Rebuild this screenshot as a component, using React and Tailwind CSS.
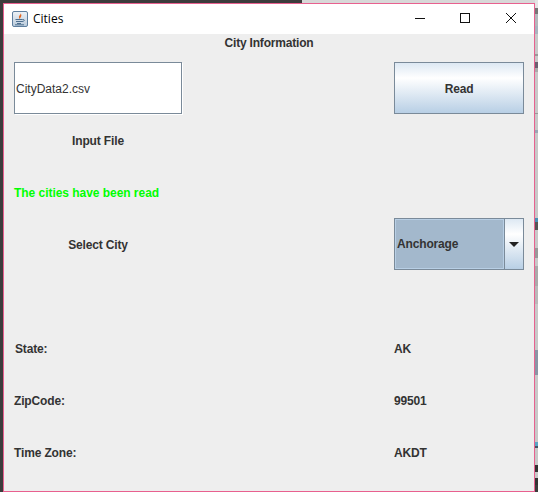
import React from "react";

const stripe = [
  [8, "#e4e4e4"], [6, "#777777"], [12, "#b4b8bc"], [8, "#a9b4bf"], [20, "#c8c8c8"], [2, "#999999"],
  [6, "#c8c8c8"], [6, "#6a6070"], [4, "#aaaaaa"], [41, "#c8c8c8"], [1, "#999999"], [16, "#c8c8c8"],
  [3, "#9aa7b5"], [85, "#c8c8c8"], [4, "#4a90b5"], [8, "#555555"], [18, "#c8c8c8"], [10, "#999999"],
  [8, "#c8c8c8"], [20, "#aaaaaa"], [18, "#b9b9b9"], [46, "#c8c8c8"], [25, "#8a95a5"], [67, "#c8c8c8"],
  [4, "#5aa5c5"], [2, "#445566"], [17, "#c8c8c8"], [7, "#333333"], [6, "#c8c8c8"], [7, "#333333"],
];

const JavaIcon = () => (
  <svg width="16" height="16" viewBox="0 0 16 16" fill="none">
    <defs>
      <linearGradient id="frame" x1="0" y1="0" x2="0" y2="1">
        <stop offset="0" stopColor="#eef2f6" />
        <stop offset="1" stopColor="#b9cadb" />
      </linearGradient>
    </defs>
    <rect x="0.5" y="0.5" width="15" height="15" rx="1.5" fill="url(#frame)" stroke="#5f7f9f" />
    <path d="M8.5 2C9.5 3.5 6.5 4.5 7 6.5C7.3 7.5 8 8 8 8C7.8 6.5 10.8 5.5 8.5 2Z" fill="#e2661f" />
    <path d="M3.5 8.5H10.5M4 10.5H10M5 12.5H9" stroke="#4d6f8f" strokeWidth="1.2" />
    <path d="M10.5 8.5C13 8 13 10.5 10 10.5" stroke="#4d6f8f" />
    <path d="M3 13.8H12" stroke="#4d6f8f" />
  </svg>
);

const Label = ({ children, className = "" }) => (
  <div className={`flex items-center h-[52px] pt-[1px] font-bold text-[12px] tracking-[-0.15px] text-[#333333] ${className}`}>{children}</div>
);

export default function App() {
  return (
    <div className="relative w-[538px] h-[492px] overflow-hidden bg-[#3c3c3c] font-['Liberation_Sans',Arial,sans-serif]">
      <div className="flex h-[3px]">
        <div className="w-[302px] bg-[#3c3c3c]"></div>
        <div className="flex-1 bg-[#d8d8d8]"></div>
      </div>
      <div className="flex h-[489px]">
        <div className="w-[3px] bg-[#3c3c3c]"></div>
        <div className="w-[532px] flex flex-col border border-[#e8608f] bg-[#eeeeee]">
          <div className="flex items-center h-[30px] bg-white pl-[8px] shrink-0">
            <JavaIcon />
            <span className="ml-[5px] text-[12px] text-black font-['Open_Sans',sans-serif]">Cities</span>
            <div className="ml-auto flex items-center text-black">
              <svg width="138" height="30" viewBox="0 0 138 30" fill="none" stroke="#111111">
                <path d="M19 14.5H29" />
                <rect x="64.5" y="9.5" width="9" height="9" />
                <path d="M110 9L120 19M120 9L110 19" />
              </svg>
            </div>
          </div>
          <div className="h-[28px] pb-[10px] flex items-center justify-center font-bold text-[12px] tracking-[-0.19px] text-[#333333] shrink-0">
            City Information
          </div>
          <div className="grid grid-cols-[168px_1fr_130px] px-[10px]">
            <div className="h-[52px] flex items-center pl-[1px] pt-[1px] bg-white border border-[#7a8a99] text-[12px] text-[#333333] shadow-[1px_1px_0_#ffffff]">
              CityData2.csv
            </div>
            <div></div>
            <div className="h-[52px] flex items-center justify-center pt-[1px] font-bold text-[12px] tracking-[-0.15px] text-[#333333] border border-[#7a8a99] bg-[linear-gradient(#dde8f3_0%,#ffffff_30%,#b8cfe5_100%)]">
              Read
            </div>

            <Label className="justify-center">Input File</Label>
            <div></div>
            <div></div>

            <Label className="col-span-3 !text-[#00ff00] !tracking-[-0.04px]">The cities have been read</Label>

            <Label className="justify-center">Select City</Label>
            <div></div>
            <div className="h-[52px] flex border border-[#7a8a99]">
              <div className="flex-1 flex items-center pl-[1px] bg-[#a3b8cc] border border-[#b8cfe5] font-bold text-[12px] tracking-[-0.15px] text-[#333333]">
                Anchorage
              </div>
              <div className="w-[19px] flex items-center justify-center border-l border-[#7a8a99] bg-[linear-gradient(#dde8f3_0%,#ffffff_30%,#b8cfe5_100%)]">
                <svg width="10" height="5" viewBox="0 0 10 5">
                  <path d="M0 0H10L5 5Z" fill="#222222" />
                </svg>
              </div>
            </div>

            <div className="col-span-3 h-[52px]"></div>

            <Label className="pl-[1px]">State:</Label>
            <div></div>
            <Label>AK</Label>

            <Label>ZipCode:</Label>
            <div></div>
            <Label>99501</Label>

            <Label>Time Zone:</Label>
            <div></div>
            <Label>AKDT</Label>
          </div>
        </div>
        <div className="w-[3px]"></div>
      </div>
      <div className="absolute top-0 left-[535px] w-[3px] flex flex-col">
        {stripe.map(([h, c], i) => (
          <div key={i} style={{ height: h, backgroundColor: c }}></div>
        ))}
      </div>
    </div>
  );
}
